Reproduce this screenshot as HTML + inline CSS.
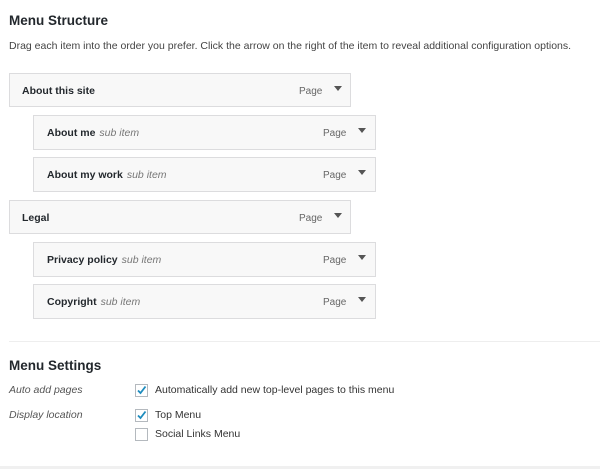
<!DOCTYPE html>
<html><head><style>
body{margin:0;width:600px;height:469px;background:#fff;font-family:"Liberation Sans",sans-serif;color:#23282d;position:relative;overflow:hidden}
.a{position:absolute}
.h{font-size:13.5px;font-weight:bold;color:#23282d}
.d{font-size:10.5px;color:#444}
.box{position:absolute;height:33px;background:#f8f8f8;border:1px solid #dcdcde;box-sizing:border-box}
.box .t{position:absolute;top:11px;font-size:10.5px;font-weight:bold;color:#23282d}
.box .t i{font-weight:normal;color:#777;margin-left:4px}
.box .p{position:absolute;top:12px;font-size:10px;color:#666}
.box .ar{position:absolute;top:12px;width:0;height:0;border-left:4px solid transparent;border-right:4px solid transparent;border-top:5px solid #555}
.l{font-size:10.5px;font-style:italic;color:#555}
.cb{position:absolute;width:11px;height:11px;border:1px solid #b4b9be;background:#fff}
.cb svg{position:absolute;left:0;top:0}
.c{font-size:10.5px;color:#333}
</style></head><body>
<div class="a h" style="left:9px;top:13px">Menu Structure</div>
<div class="a d" style="left:9px;top:40px">Drag each item into the order you prefer. Click the arrow on the right of the item to reveal additional configuration options.</div>

<div class="box" style="left:9px;top:73px;width:342px;height:34px"><span class="t" style="left:12px">About this site</span><span class="p" style="left:289px">Page</span><span class="ar" style="left:324px"></span></div>
<div class="box" style="left:33px;top:115px;width:343px;height:35px"><span class="t" style="left:13px">About me<i>sub item</i></span><span class="p" style="left:289px">Page</span><span class="ar" style="left:324px"></span></div>
<div class="box" style="left:33px;top:157px;width:343px;height:35px"><span class="t" style="left:13px">About my work<i>sub item</i></span><span class="p" style="left:289px">Page</span><span class="ar" style="left:324px"></span></div>
<div class="box" style="left:9px;top:200px;width:342px;height:34px"><span class="t" style="left:12px">Legal</span><span class="p" style="left:289px">Page</span><span class="ar" style="left:324px"></span></div>
<div class="box" style="left:33px;top:242px;width:343px;height:35px"><span class="t" style="left:13px">Privacy policy<i>sub item</i></span><span class="p" style="left:289px">Page</span><span class="ar" style="left:324px"></span></div>
<div class="box" style="left:33px;top:284px;width:343px;height:35px"><span class="t" style="left:13px">Copyright<i>sub item</i></span><span class="p" style="left:289px">Page</span><span class="ar" style="left:324px"></span></div>

<div class="a" style="left:9px;top:341px;width:591px;height:1px;background:#eee"></div>
<div class="a h" style="left:9px;top:358px">Menu Settings</div>
<div class="a l" style="left:9px;top:384px">Auto add pages</div>
<div class="a l" style="left:9px;top:409px">Display location</div>
<div class="cb" style="left:135px;top:384px"><svg width="11" height="11"><path d="M2 5.5 L4.5 8 L9.5 1.5" stroke="#1e8cbe" stroke-width="1.8" fill="none"/></svg></div>
<div class="a c" style="left:155px;top:384px">Automatically add new top-level pages to this menu</div>
<div class="cb" style="left:135px;top:409px"><svg width="11" height="11"><path d="M2 5.5 L4.5 8 L9.5 1.5" stroke="#1e8cbe" stroke-width="1.8" fill="none"/></svg></div>
<div class="a c" style="left:155px;top:409px">Top Menu</div>
<div class="cb" style="left:135px;top:428px"></div>
<div class="a c" style="left:155px;top:428px">Social Links Menu</div>
<div class="a" style="left:0;top:466px;width:600px;height:3px;background:#f0f0f0"></div>
</body></html>
